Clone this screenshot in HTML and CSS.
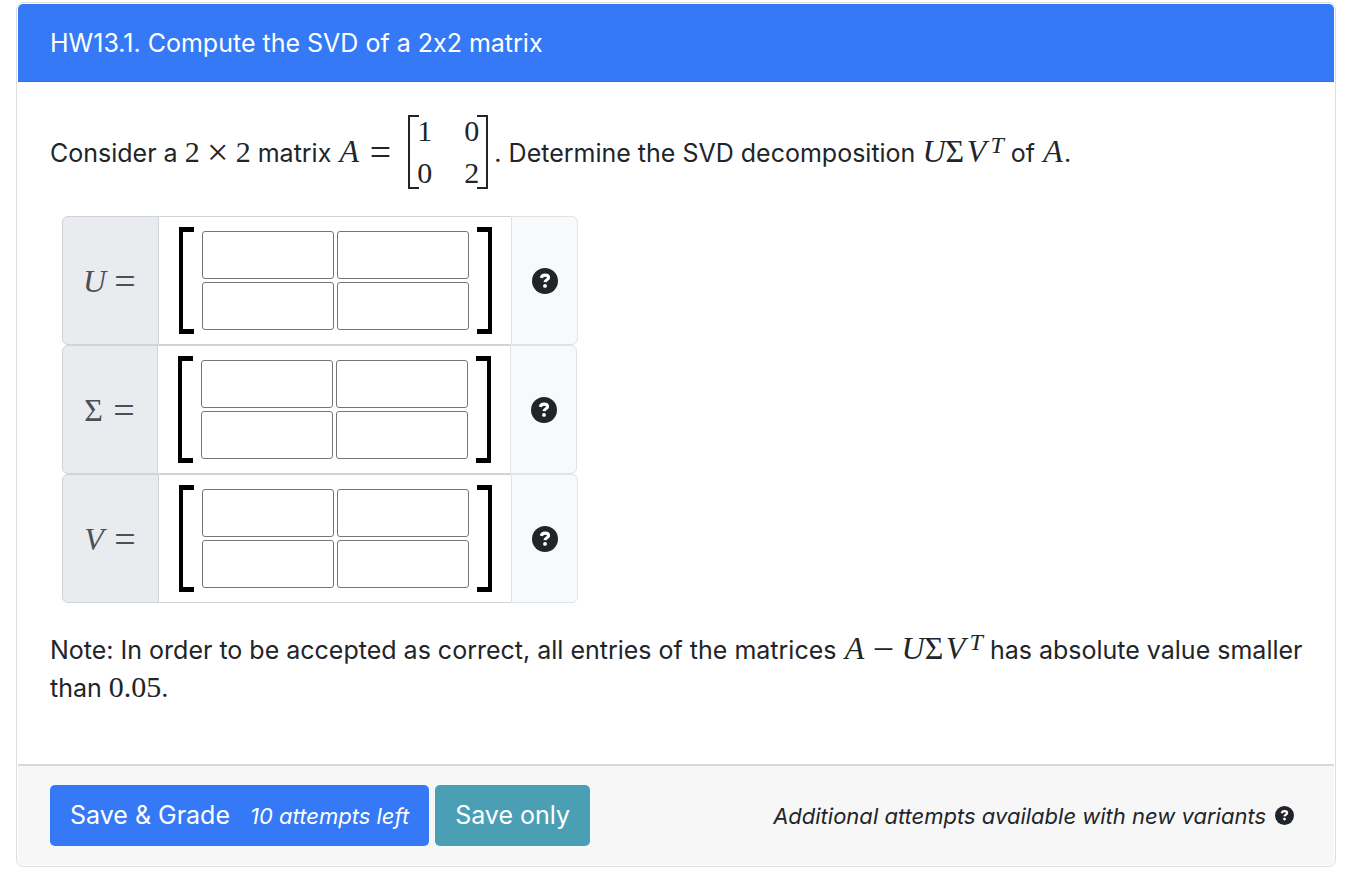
FILE: index.html
```
<!DOCTYPE html>
<html lang="en">
<head>
    <meta charset="UTF-8">
    <meta name="viewport" content="width=device-width, initial-scale=1.0">
    <title>HW13.1. Compute the SVD of a 2x2 matrix</title>
    <link rel="stylesheet" href="styles.css">
</head>
<body>
    <svg class="sprite" aria-hidden="true">
        <symbol id="question" viewBox="0 0 16 16">
            <circle cx="8" cy="8" r="8" fill="currentColor"/>
            <path d="M5.700 6.100C6 4.800 6.900 4.400 8 4.400c1.300 0 2.200.6 2.200 1.600 0 1.300-2.100 1.200-2.200 2.700" fill="none" stroke="#fff" stroke-width="1.900"/>
            <circle cx="8" cy="11" r="1.200" fill="#fff"/>
        </symbol>
    </svg>

    <form class="card">
        <h1 class="card-header">HW13.1. Compute the SVD of a 2x2 matrix</h1>

        <div class="card-body">
            <p class="prompt">Consider a <span class="math">2<span class="op">×</span>2</span> matrix
                <span class="math"><i class="var">A</i><span class="rel">=</span><span class="matrix"><span>1</span><span>0</span><span>0</span><span>2</span></span></span>. Determine the SVD decomposition
                <span class="math"><i class="var">U</i><span class="sigma">Σ</span><i class="var">V</i><sup><i>T</i></sup></span> of <span class="math"><i class="var">A</i></span>.</p>

            <div class="answers">
                <div class="input-group">
                    <span class="label math" id="label-u"><i class="var">U</i><span class="rel">=</span></span>
                    <div class="entries" role="group" aria-labelledby="label-u">
                        <div class="bracket left"></div>
                        <div class="grid">
                            <input type="text" aria-label="U row 1 column 1">
                            <input type="text" aria-label="U row 1 column 2">
                            <input type="text" aria-label="U row 2 column 1">
                            <input type="text" aria-label="U row 2 column 2">
                        </div>
                        <div class="bracket right"></div>
                    </div>
                    <button type="button" class="help" aria-label="Help"><svg class="icon"><use href="#question"/></svg></button>
                </div>

                <div class="input-group">
                    <span class="label math" id="label-s"><span class="sigma">Σ</span><span class="rel">=</span></span>
                    <div class="entries" role="group" aria-labelledby="label-s">
                        <div class="bracket left"></div>
                        <div class="grid">
                            <input type="text" aria-label="Sigma row 1 column 1">
                            <input type="text" aria-label="Sigma row 1 column 2">
                            <input type="text" aria-label="Sigma row 2 column 1">
                            <input type="text" aria-label="Sigma row 2 column 2">
                        </div>
                        <div class="bracket right"></div>
                    </div>
                    <button type="button" class="help" aria-label="Help"><svg class="icon"><use href="#question"/></svg></button>
                </div>

                <div class="input-group">
                    <span class="label math" id="label-v"><i class="var">V</i><span class="rel">=</span></span>
                    <div class="entries" role="group" aria-labelledby="label-v">
                        <div class="bracket left"></div>
                        <div class="grid">
                            <input type="text" aria-label="V row 1 column 1">
                            <input type="text" aria-label="V row 1 column 2">
                            <input type="text" aria-label="V row 2 column 1">
                            <input type="text" aria-label="V row 2 column 2">
                        </div>
                        <div class="bracket right"></div>
                    </div>
                    <button type="button" class="help" aria-label="Help"><svg class="icon"><use href="#question"/></svg></button>
                </div>
            </div>

            <p class="note">Note: In order to be accepted as correct, all entries of the matrices
                <span class="math"><i class="var">A</i><span class="op">−</span><i class="var">U</i><span class="sigma">Σ</span><i class="var">V</i><sup><i>T</i></sup></span> has absolute value smaller than <span class="math">0.05</span>.</p>
        </div>

        <div class="card-footer">
            <button type="submit" class="btn btn-primary">Save &amp; Grade <em>10 attempts left</em></button>
            <button type="button" class="btn btn-info">Save only</button>
            <div class="variants">
                <em>Additional attempts available with new variants</em>
                <button type="button" class="help-small" aria-label="More about variants"><svg class="icon"><use href="#question"/></svg></button>
            </div>
        </div>
    </form>
</body>
</html>
```
FILE: styles.css
```
* {
    margin: 0;
    padding: 0;
    box-sizing: border-box;
}

body {
    font-family: Inter, "Liberation Sans", sans-serif;
    font-size: 25px;
    font-feature-settings: "calt" 0;
    line-height: 38px;
    color: #212529;
    background: #fff;
    padding: 2px 12px 18px 16px;
}

button {
    font: inherit;
    border: none;
    cursor: pointer;
}

.sprite {
    position: absolute;
    width: 0;
    height: 0;
}

.card {
    border: 1px solid #dfdfdf;
    border-radius: 7px;
    padding: 1px;
}

.card-header {
    font-size: 25px;
    font-weight: 400;
    color: #fff;
    background: #3579f6;
    border-bottom: 1px solid #306dde;
    border-radius: 5px 5px 0 0;
    padding: 20px 32px 19px;
}

.card-body {
    padding: 33px 20px 57px 32px;
}

/* math */
.math {
    font-family: "Liberation Serif", serif;
    font-size: 30px;
    line-height: 30px;
    white-space: nowrap;
}

.var,
.sigma {
    display: inline-block;
    width: 22px;
    font-size: 32px;
    text-align: center;
}

.sigma {
    width: 21px;
}

.op,
.rel {
    display: inline-block;
    width: 36px;
    font-size: 38px;
    text-align: center;
    vertical-align: -3px;
}

.rel {
    width: 40px;
}

.math sup {
    font-size: 24px;
    line-height: 0;
    vertical-align: 9px;
    margin-left: 3px;
}

.matrix {
    display: inline-grid;
    grid-template-columns: 15px 15px;
    grid-template-rows: 42px 42px;
    align-content: center;
    align-items: center;
    justify-content: space-between;
    vertical-align: 21px;
    position: relative;
    width: 80px;
    height: 74px;
    padding: 0 9px;
    margin: 0 6px 0 8px;
}

.matrix::before,
.matrix::after {
    content: "";
    position: absolute;
    top: 0;
    bottom: 0;
    width: 9px;
    border: 2px solid #212529;
}

.matrix::before {
    left: 0;
    border-right: none;
}

.matrix::after {
    right: 0;
    border-left: none;
}

/* answer inputs */
.answers {
    padding: 27px 12px 28px;
}

.input-group {
    display: flex;
    width: fit-content;
}

.label {
    display: flex;
    align-items: center;
    color: #495057;
    background: #e9ebef;
    border: 1px solid #ced4da;
    border-radius: 6px 0 0 6px;
    padding: 0 13px 0 20px;
}

.entries {
    display: flex;
    gap: 8px;
    border: 1px solid #ced4da;
    border-width: 1px 0;
    padding: 10px 19px 10px 20px;
}

.bracket {
    width: 15px;
    height: 107px;
    border: solid #000;
}

.bracket.left {
    border-width: 5px 0 5px 4px;
}

.bracket.right {
    border-width: 5px 4px 5px 0;
}

.grid {
    display: grid;
    grid-template-columns: 132px 132px;
    gap: 3px;
    align-content: center;
}

.grid input {
    width: 100%;
    height: 48px;
    font: inherit;
    text-align: center;
    border: 1px solid #767676;
    border-radius: 3px;
    background: #fff;
}

.help {
    display: flex;
    align-items: center;
    color: #212529;
    background: #f8f9fb;
    border: 1px solid #dfe2e6;
    border-radius: 0 6px 6px 0;
    padding: 0 19px 0 20px;
}

.icon {
    display: block;
    width: 26px;
    height: 26px;
}

/* footer */
.card-footer {
    display: flex;
    align-items: center;
    gap: 6px;
    background: #f7f7f7;
    border-top: 2px solid #d8d8d8;
    border-radius: 0 0 5px 5px;
    padding: 19px 40px 19px 32px;
}

.btn {
    color: #fff;
    border-radius: 5px;
    padding: 11px 20px 12px;
    white-space: nowrap;
}

.btn em {
    font-size: 22px;
    line-height: 22px;
    margin-left: 13px;
}

.btn-primary {
    background: #3579f6;
}

.btn-info {
    background: #4b9fb5;
}

.variants {
    display: flex;
    align-items: center;
    gap: 9px;
    font-size: 22px;
    margin-left: auto;
}

.help-small {
    color: #212529;
    background: none;
}

.help-small .icon {
    width: 19px;
    height: 19px;
}
```
